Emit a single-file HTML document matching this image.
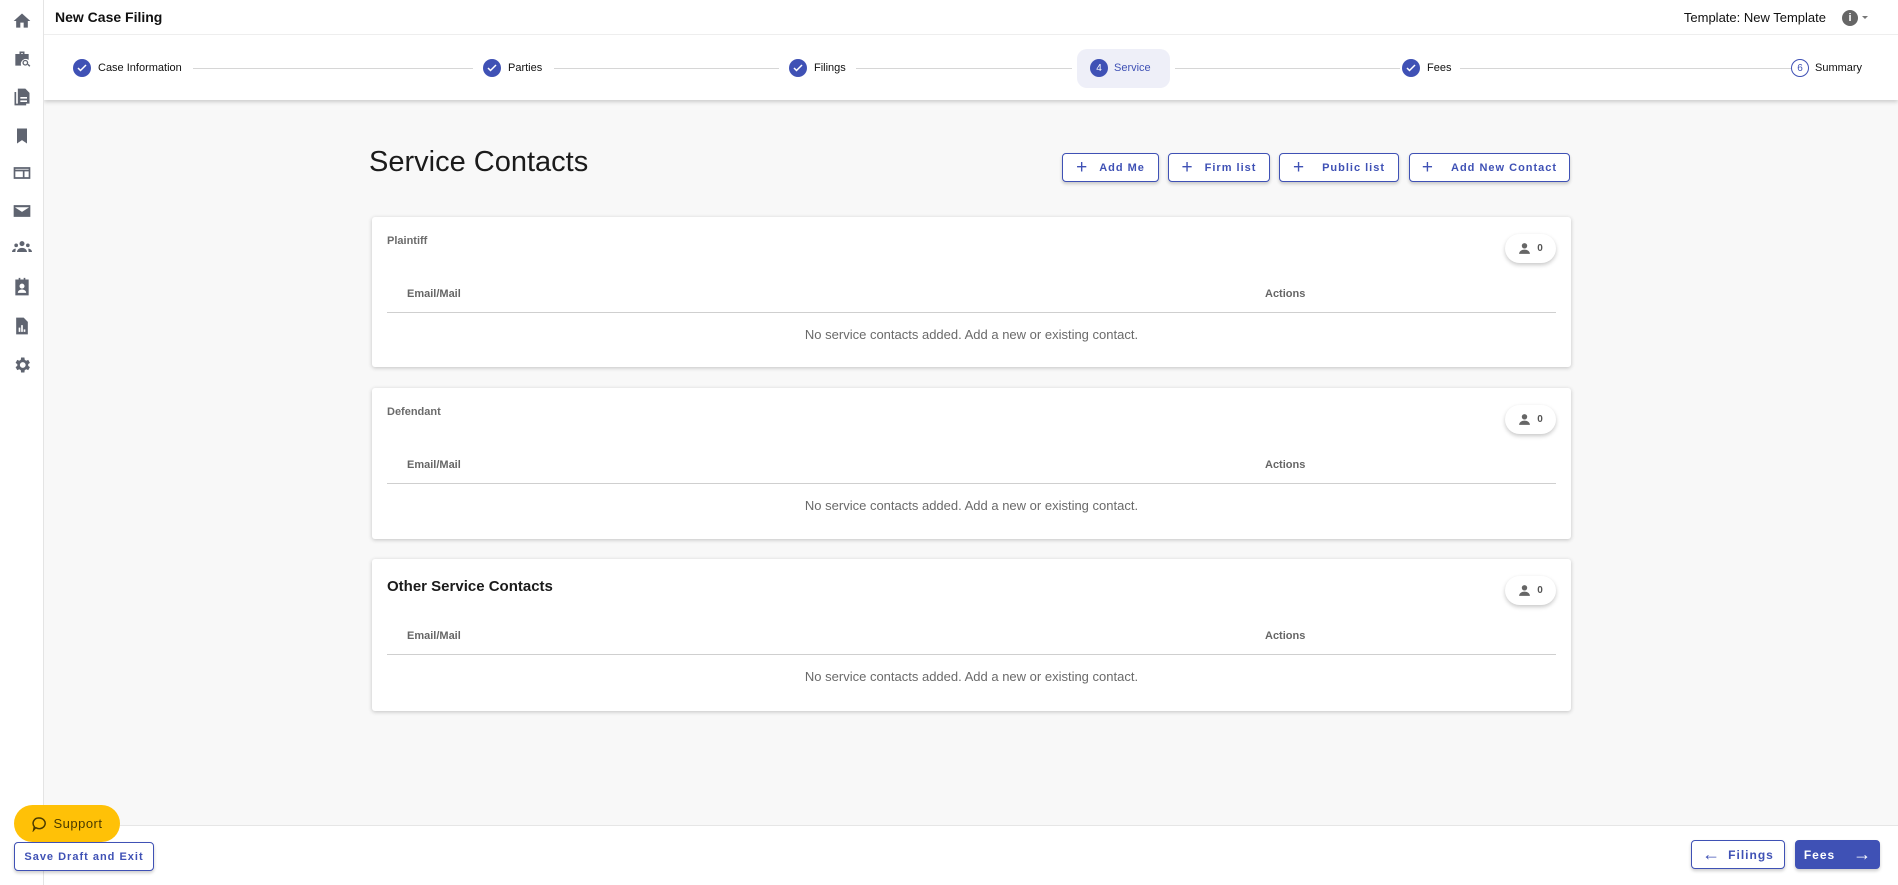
<!DOCTYPE html>
<html><head><meta charset="utf-8">
<style>
*{box-sizing:border-box;margin:0;padding:0}
body{width:1898px;height:885px;overflow:hidden;background:#f8f8f8;font-family:"Liberation Sans",sans-serif;position:relative;color:#222}
.abs{position:absolute}
#side{left:0;top:0;width:44px;height:885px;background:#fff;border-right:1px solid #e4e4e4;z-index:3}
#side svg{position:absolute;left:12px;width:20px;height:20px;fill:#5f6470}
#top{left:44px;top:0;right:0;height:100px;background:#fff;box-shadow:0 2px 4px rgba(0,0,0,.18);z-index:2}
#top .bar{position:absolute;left:0;right:0;top:34px;border-top:1px solid #eee}
.title{left:11px;top:9px;font-size:14px;font-weight:bold;color:#111}
.tmpl{right:72px;top:10px;font-size:13px;color:#111}
.step{position:absolute;top:58px;height:20px;display:flex;align-items:center;font-size:11px;color:#111}
.ck{width:18px;height:18px;border-radius:50%;background:#3f51b5;display:inline-flex;align-items:center;justify-content:center;margin-right:7px}
.num{width:18px;height:18px;border-radius:50%;display:inline-flex;align-items:center;justify-content:center;margin-right:6px;font-size:10px}
.line{position:absolute;top:68px;height:1px;background:#d6d6d6}
h1{position:absolute;left:369px;top:146px;font-size:29px;font-weight:500;color:#1b1b1b}
.btn{position:absolute;top:153px;height:29px;border:1.5px solid #3f51b5;border-radius:4px;background:#fff;color:#3f51b5;font-size:11px;font-weight:bold;letter-spacing:1px;display:flex;align-items:center;justify-content:center;box-shadow:0 2px 3px rgba(0,0,0,.2)}
.btn b{font-size:19px;font-weight:normal;margin-right:12px;letter-spacing:0}
.card{position:absolute;left:372px;width:1199px;background:#fff;border-radius:3px;box-shadow:0 1px 4px rgba(0,0,0,.22)}
.card .lbl{position:absolute;left:15px;top:18px;font-size:11px;font-weight:bold;color:#6b6b6b}
.card .big{position:absolute;left:15px;top:19px;font-size:15px;font-weight:bold;color:#1b1b1b}
.pill{position:absolute;right:15px;top:17px;width:51px;height:29px;border-radius:15px;background:#fff;box-shadow:0 2px 4px rgba(0,0,0,.22);display:flex;align-items:center;justify-content:center;font-size:10px;font-weight:bold;color:#555}
.th{position:absolute;top:71px;font-size:11px;font-weight:bold;color:#666}
.hr{position:absolute;left:15px;right:15px;top:95px;height:1px;background:#cfcfcf}
.empty{position:absolute;left:0;right:0;top:110px;text-align:center;font-size:13px;color:#6a6a6a}
#foot{left:44px;right:0;top:825px;height:60px;background:#fff;border-top:1px solid #e6e6e6}
</style></head><body>
<div id="side" class="abs">
<svg style="top:11px" viewBox="0 0 24 24"><path d="M10 20v-6h4v6h5v-8h3L12 3 2 12h3v8z"/></svg>
<svg style="top:49px" viewBox="0 0 24 24"><path d="M9 3h6v3h5v7a6 6 0 0 0-9 7H4V6h5zM11 5v1h2V5zM16 13a3.5 3.5 0 1 1 0 7 3.5 3.5 0 0 1 0-7zm0 1.6a1.9 1.9 0 1 0 0 3.8 1.9 1.9 0 0 0 0-3.8zM18.5 19l1.2-1.2 2.3 2.3-1.2 1.2z"/></svg>
<svg style="top:87px" viewBox="0 0 24 24"><path d="M3 6h2v14h12v2H3zM7 2h9l5 5v13H7zm3 10v2h8v-2zm0 4v2h8v-2z"/></svg>
<svg style="top:126px" viewBox="0 0 24 24"><path d="M6 3h12v18l-6-4-6 4z"/></svg>
<svg style="top:163px" viewBox="0 0 24 24"><path d="M2 5h20v14H2zm2 5v7h9v-7zm11 0v7h5v-7zM4 7v1h16V7z"/></svg>
<svg style="top:201px" viewBox="0 0 24 24"><path d="M2 5h20v14H2zm2 2.5V8l8 5 8-5v-.5z"/></svg>
<svg style="top:237px" viewBox="0 0 24 24"><circle cx="12" cy="8" r="3"/><circle cx="5" cy="10" r="2.2"/><circle cx="19" cy="10" r="2.2"/><path d="M6 18c0-3 3-5 6-5s6 2 6 5zM0 18c0-2 2-4 4.5-4L4 18zM24 18c0-2-2-4-4.5-4l.5 4z"/></svg>
<svg style="top:277px" viewBox="0 0 24 24"><path d="M4 3h16v19H4zm4-2h2v3H8zm6 0h2v3h-2zM12 8a3 3 0 1 0 0 6 3 3 0 0 0 0-6zm-5 11h10c0-2.5-2.5-4-5-4s-5 1.5-5 4z"/></svg>
<svg style="top:316px" viewBox="0 0 24 24"><path d="M5 2h9l5 5v15H5zm3 12v5h2v-5zm3-3v8h2v-8zm3 5v3h2v-3z"/></svg>
<svg style="top:355px" viewBox="0 0 24 24"><path d="M19.4 13a7.5 7.5 0 0 0 0-2l2.1-1.6-2-3.5-2.5 1a7 7 0 0 0-1.7-1L14.9 3h-4l-.4 2.9a7 7 0 0 0-1.7 1l-2.5-1-2 3.5L6.4 11a7.5 7.5 0 0 0 0 2l-2.1 1.6 2 3.5 2.5-1a7 7 0 0 0 1.7 1l.4 2.9h4l.4-2.9a7 7 0 0 0 1.7-1l2.5 1 2-3.5zM12.9 15.5a3.5 3.5 0 1 1 0-7 3.5 3.5 0 0 1 0 7z"/></svg>
</div>

<div id="top" class="abs">
<div class="bar"></div>
<div class="abs title">New Case Filing</div>
<div class="abs tmpl">Template: New Template</div>
<div class="abs" style="right:40px;top:10px;width:16px;height:16px;border-radius:50%;background:#666;color:#fff;font-size:11px;font-weight:bold;text-align:center;line-height:16px">i</div>
<div class="abs" style="right:30px;top:16px;border-left:3px solid transparent;border-right:3px solid transparent;border-top:3px solid #777"></div>
</div>
<div style="position:absolute;left:0;top:0;width:1898px;height:100px;z-index:2;pointer-events:none">
<div class="line" style="left:193px;width:280px"></div>
<div class="line" style="left:554px;width:225px"></div>
<div class="line" style="left:856px;width:216px"></div>
<div class="line" style="left:1175px;width:225px"></div>
<div class="line" style="left:1460px;width:332px"></div>
<div class="step" style="left:73px"><span class="ck"><svg width="12" height="12" viewBox="0 0 24 24"><path d="M4 12l5 5L20 6" stroke="#fff" stroke-width="3" fill="none"/></svg></span>Case Information</div>
<div class="step" style="left:483px"><span class="ck"><svg width="12" height="12" viewBox="0 0 24 24"><path d="M4 12l5 5L20 6" stroke="#fff" stroke-width="3" fill="none"/></svg></span>Parties</div>
<div class="step" style="left:789px"><span class="ck"><svg width="12" height="12" viewBox="0 0 24 24"><path d="M4 12l5 5L20 6" stroke="#fff" stroke-width="3" fill="none"/></svg></span>Filings</div>
<div class="abs" style="left:1077px;top:49px;width:93px;height:39px;border-radius:10px;background:#eeeff8"></div>
<div class="step" style="left:1090px;color:#3f51b5"><span class="num" style="background:#3f51b5;color:#fff">4</span>Service</div>
<div class="step" style="left:1402px"><span class="ck"><svg width="12" height="12" viewBox="0 0 24 24"><path d="M4 12l5 5L20 6" stroke="#fff" stroke-width="3" fill="none"/></svg></span>Fees</div>
<div class="step" style="left:1791px"><span class="num" style="border:1px solid #3f51b5;color:#3f51b5">6</span>Summary</div>
</div>

<h1>Service Contacts</h1>
<div class="btn" style="left:1062px;width:97px"><b>+</b>Add Me</div>
<div class="btn" style="left:1168px;width:102px"><b>+</b>Firm list</div>
<div class="btn" style="left:1279px;width:120px"><b style="margin-right:18px">+</b>Public list</div>
<div class="btn" style="left:1409px;width:161px"><b style="margin-right:18px">+</b>Add New Contact</div>

<div class="card" style="top:217px;height:150px">
<div class="lbl">Plaintiff</div>
<div class="pill"><svg width="13" height="13" viewBox="0 0 24 24" fill="#666" style="margin-right:6px"><circle cx="12" cy="7" r="5"/><path d="M2 22c0-5 5-8 10-8s10 3 10 8z"/></svg>0</div>
<div class="th" style="left:35px">Email/Mail</div><div class="th" style="left:893px">Actions</div>
<div class="hr"></div>
<div class="empty">No service contacts added. Add a new or existing contact.</div>
</div>
<div class="card" style="top:388px;height:151px">
<div class="lbl">Defendant</div>
<div class="pill"><svg width="13" height="13" viewBox="0 0 24 24" fill="#666" style="margin-right:6px"><circle cx="12" cy="7" r="5"/><path d="M2 22c0-5 5-8 10-8s10 3 10 8z"/></svg>0</div>
<div class="th" style="left:35px">Email/Mail</div><div class="th" style="left:893px">Actions</div>
<div class="hr"></div>
<div class="empty">No service contacts added. Add a new or existing contact.</div>
</div>
<div class="card" style="top:559px;height:152px">
<div class="big">Other Service Contacts</div>
<div class="pill"><svg width="13" height="13" viewBox="0 0 24 24" fill="#666" style="margin-right:6px"><circle cx="12" cy="7" r="5"/><path d="M2 22c0-5 5-8 10-8s10 3 10 8z"/></svg>0</div>
<div class="th" style="left:35px">Email/Mail</div><div class="th" style="left:893px">Actions</div>
<div class="hr"></div>
<div class="empty">No service contacts added. Add a new or existing contact.</div>
</div>

<div id="foot" class="abs"></div>
<div class="abs" style="left:14px;top:805px;width:106px;height:37px;border-radius:19px;background:#ffc107;display:flex;align-items:center;justify-content:center;font-size:13px;color:#4a3a00;font-weight:500;letter-spacing:.5px;z-index:4"><svg width="16" height="16" viewBox="0 0 24 24" style="margin-right:6px"><path d="M12 3a9 8 0 1 1-5 14.5L4 21l1-5A8 8 0 0 1 12 3z" fill="none" stroke="#4a3a00" stroke-width="2.2"/></svg>Support</div>
<div class="btn" style="left:14px;top:842px;width:140px;height:29px;font-size:11px;z-index:4">Save Draft and Exit</div>
<div class="btn" style="left:1691px;top:840px;width:94px;height:29px;font-size:12px"><b style="font-size:18px;margin-right:8px">←</b>Filings</div>
<div class="btn" style="left:1795px;top:840px;width:85px;height:29px;background:#3f51b5;color:#fff;font-size:12px">Fees<b style="font-size:18px;margin:0 0 0 18px">→</b></div>
</body></html>
